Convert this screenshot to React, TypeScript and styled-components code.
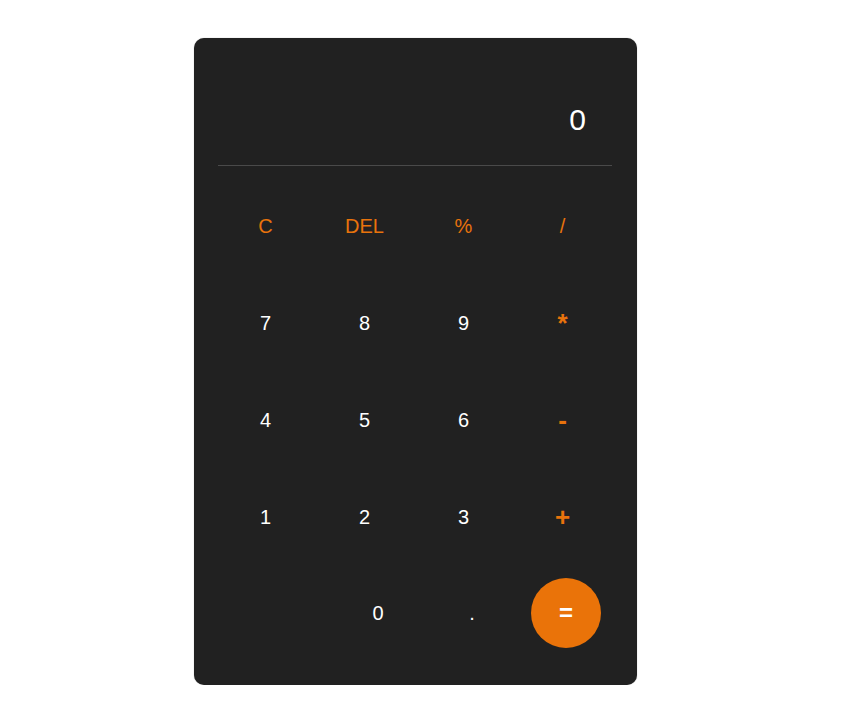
import React from 'react';
import styled, { createGlobalStyle } from 'styled-components';

const GlobalStyle = createGlobalStyle`
  body {
    margin: 0;
    background: #ffffff;
    font-family: "Liberation Sans", Arial, sans-serif;
  }
`;

const Page = styled.div`
  padding: 38px 0 0 194px;
`;

const Card = styled.div`
  width: 443px;
  box-sizing: border-box;
  padding: 0 25px 25px 24px;
  background: #212121;
  border-radius: 10px;
  box-shadow: 0 0 1px rgba(0, 0, 0, 0.4);
`;

const Display = styled.div`
  height: 128px;
  box-sizing: border-box;
  display: flex;
  justify-content: flex-end;
  align-items: flex-end;
  padding: 0 26px 27px 0;
  border-bottom: 1px solid #4a4a4a;
  color: #ffffff;
  font-size: 30px;
  line-height: 36px;
`;

const Keys = styled.div`
  display: grid;
  grid-template-columns: repeat(4, 99px);
  grid-auto-rows: 97px;
  padding-top: 12px;
  margin-left: -2px;
`;

const Key = styled.button<{ $accent?: boolean; $big?: boolean }>`
  border: none;
  background: transparent;
  padding: 0;
  display: flex;
  align-items: center;
  justify-content: center;
  font-family: inherit;
  font-size: ${(p) => (p.$big ? '26px' : '20px')};
  font-weight: ${(p) => (p.$big ? 'bold' : 'normal')};
  color: ${(p) => (p.$accent ? '#e8730c' : '#ffffff')};
  cursor: pointer;
`;

const LastRow = styled.div`
  display: flex;
  justify-content: flex-end;
  align-items: center;
  gap: 24px;
  height: 94px;
  padding-right: 11px;
`;

const RoundKey = styled.button<{ $filled?: boolean }>`
  width: 70px;
  height: 70px;
  border: none;
  border-radius: 50%;
  padding: 0;
  font-family: inherit;
  font-size: ${(p) => (p.$filled ? '24px' : '20px')};
  font-weight: ${(p) => (p.$filled ? 'bold' : 'normal')};
  color: #ffffff;
  background: ${(p) => (p.$filled ? '#ea7309' : 'transparent')};
  cursor: pointer;
`;

const rows = [
  ['C', 'DEL', '%', '/'],
  ['7', '8', '9', '*'],
  ['4', '5', '6', '-'],
  ['1', '2', '3', '+'],
];

const accent = new Set(['C', 'DEL', '%', '/', '*', '-', '+']);
const big = new Set(['*', '-', '+']);

export default function App() {
  return (
    <Page>
      <GlobalStyle />
      <Card>
        <Display>0</Display>
        <Keys>
          {rows.flat().map((k) => (
            <Key key={k} $accent={accent.has(k)} $big={big.has(k)}>
              {k}
            </Key>
          ))}
        </Keys>
        <LastRow>
          <RoundKey>0</RoundKey>
          <RoundKey>.</RoundKey>
          <RoundKey $filled>=</RoundKey>
        </LastRow>
      </Card>
    </Page>
  );
}
